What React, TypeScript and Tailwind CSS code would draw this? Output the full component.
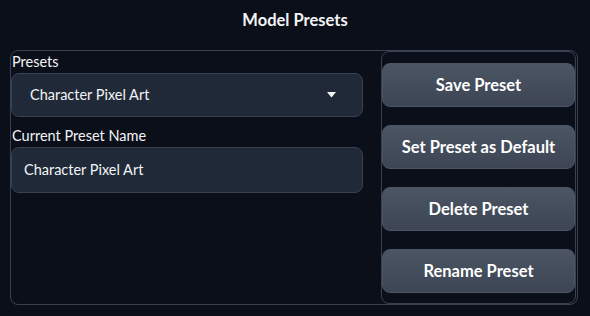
import React from "react";

export default function App() {
  const font = { fontFamily: "Lato, 'Noto Sans', sans-serif" };
  const buttons = ["Save Preset", "Set Preset as Default", "Delete Preset", "Rename Preset"];
  return (
    <div className="w-[590px] h-[316px] bg-[#0b0f19] text-[#f3f4f6] overflow-hidden" style={font}>
      <div className="h-[40px] pt-[8px] text-center text-[16.5px] font-bold leading-[24px]">Model Presets</div>
      <div className="mx-[10px] mt-[10px] h-[255px] w-[568px] rounded-[8px] border border-[#374151] flex">
        <div className="w-[352px] flex flex-col">
          <div className="text-[14.5px] leading-[20px] pl-[1px] pt-[1px]">Presets</div>
          <div className="mt-[1px] h-[44px] rounded-[8px] border border-[#374151] bg-[#1f2937] flex items-center pl-[18px] pr-[26px] justify-between">
            <span className="text-[14.5px]">Character Pixel Art</span>
            <svg width="9" height="6" viewBox="0 0 9 6">
              <path d="M0 0 L9 0 L4.5 5.5 Z" fill="#f3f4f6" />
            </svg>
          </div>
          <div className="mt-[9px] text-[14.5px] leading-[20px] pl-[1px]">Current Preset Name</div>
          <div className="mt-[1px] h-[46px] rounded-[8px] border border-[#374151] bg-[#1f2937] flex items-center pl-[12px]">
            <span className="text-[14.5px]">Character Pixel Art</span>
          </div>
        </div>
        <div className="ml-[18px] flex-1 mr-[1px] rounded-[8px] border border-[#374151] flex flex-col gap-[18px] pt-[11px]">
          {buttons.map((b) => (
            <div
              key={b}
              className="h-[44px] rounded-[8px] border border-[#4b5563] bg-gradient-to-b from-[#4b5563] to-[#3d4554] flex items-center justify-center text-[16.5px] font-bold text-white"
            >
              {b}
            </div>
          ))}
        </div>
      </div>
    </div>
  );
}
